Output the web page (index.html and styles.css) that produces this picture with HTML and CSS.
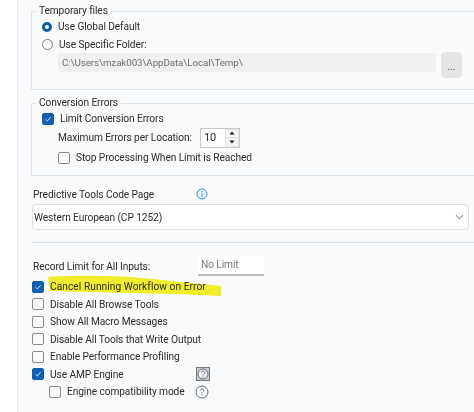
FILE: index.html
```html
<!DOCTYPE html>
<html lang="en">
<head>
    <meta charset="UTF-8">
    <meta name="viewport" content="width=device-width, initial-scale=1.0">
    <title>Workflow Configuration</title>
    <link rel="stylesheet" href="styles.css">
</head>
<body>
    <div id="wrap">
        <fieldset class="group group_temp">
            <legend>Temporary files</legend>
            <div class="row"><i class="radio on"></i><span>Use Global Default</span></div>
            <div class="row"><i class="radio"></i><span>Use Specific Folder:</span></div>
            <div class="folder">
                <div class="path">C:\Users\mzak003\AppData\Local\Temp\</div>
                <div class="browse">...</div>
            </div>
        </fieldset>
        <fieldset class="group group_errors">
            <legend>Conversion Errors</legend>
            <div class="row">
                <i class="check on"><svg viewBox="0 0 12 12"><path d="M3 6.2 5.2 8.3 9 4"/></svg></i>
                <span>Limit Conversion Errors</span>
            </div>
            <div class="row max_row">
                <span class="max_label">Maximum Errors per Location:</span>
                <div class="spinner">
                    <span class="spin_value">10</span>
                    <div class="spin_btns">
                        <b><svg viewBox="0 0 8 5"><path d="M4 .5 7.5 4.5H.5Z"/></svg></b>
                        <b><svg viewBox="0 0 8 5"><path d="M4 4.5 7.5 .5H.5Z"/></svg></b>
                    </div>
                </div>
            </div>
            <div class="row sub"><i class="check"></i><span>Stop Processing When Limit is Reached</span></div>
        </fieldset>
        <div class="code_label">
            <span>Predictive Tools Code Page</span>
            <svg class="info" viewBox="0 0 12 12"><circle cx="6" cy="6" r="5"/><path d="M6 5.4V9M6 3v1.2"/></svg>
        </div>
        <div class="select">
            <span>Western European (CP 1252)</span>
            <svg viewBox="0 0 10 6"><path d="M1 1 5 5 9 1"/></svg>
        </div>
        <div class="divider"></div>
        <div class="limit_row">
            <span class="limit_label">Record Limit for All Inputs:</span>
            <div class="limit_input">No Limit</div>
        </div>
        <div class="options">
            <div class="row">
                <i class="check on"><svg viewBox="0 0 12 12"><path d="M3 6.2 5.2 8.3 9 4"/></svg></i>
                <span class="cancel_label">Cancel Running Workflow on Error</span>
            </div>
            <div class="row"><i class="check"></i><span>Disable All Browse Tools</span></div>
            <div class="row"><i class="check"></i><span>Show All Macro Messages</span></div>
            <div class="row"><i class="check"></i><span>Disable All Tools that Write Output</span></div>
            <div class="row"><i class="check"></i><span>Enable Performance Profiling</span></div>
            <div class="row">
                <i class="check on"><svg viewBox="0 0 12 12"><path d="M3 6.2 5.2 8.3 9 4"/></svg></i>
                <span class="amp_label">Use AMP Engine</span>
                <svg class="help boxed" viewBox="0 0 14 14"><circle cx="7" cy="7" r="5"/><path d="M5.3 5.6C5.4 3.6 8.7 3.7 8.7 5.6 8.7 6.9 7 6.9 7 8.4M7 9.4v1"/></svg>
            </div>
            <div class="row sub_engine">
                <i class="check"></i>
                <span class="engine_label">Engine compatibility mode</span>
                <svg class="help" viewBox="0 0 14 14"><circle cx="7" cy="7" r="6"/><path d="M5.3 5.6C5.4 3.6 8.7 3.7 8.7 5.6 8.7 6.9 7 6.9 7 8.4M7 9.4v1"/></svg>
            </div>
        </div>
        <svg class="marker" viewBox="0 0 474 412"><path d="M48 277C70 275 110 276 130 277 160 279 195 284 221 286L221 296C190 294 120 293 50 291Z"/></svg>
    </div>
</body>
</html>
```

FILE: styles.css
```css
body {
    margin: 0;
    background: #fff;
    font-family: Roboto, Lato, sans-serif;
    font-size: 10.2px;
    letter-spacing: -.1px;
    color: #2c2c2c;
}
#wrap {
    position: relative;
    width: 457px;
    height: 412px;
    margin-left: 17px;
    box-sizing: border-box;
    padding: 0 0 0 13px;
    overflow: hidden;
    background: #f9fafc;
    border-left: 1px solid #eceef2;
}
span {
    white-space: nowrap;
}
.group {
    box-sizing: border-box;
    margin: 0 -14px 0 0;
    padding: 0 0 0 10px;
    border: 1px solid #dfe2e7;
    border-right: 0;
    min-width: 0;
}
.group legend {
    padding: 0 3px 0 4px;
    margin-left: -7px;
    line-height: 14px;
}
.group_temp {
    height: 86px;
    margin-top: 4px;
}
.group_errors {
    height: 80px;
    margin-top: 6px;
}
.row {
    display: flex;
    align-items: center;
    gap: 6px;
    height: 17.5px;
}
.radio {
    width: 9px;
    height: 9px;
    border: 1px solid #7a7a7a;
    border-radius: 50%;
    background: #fdfdfd;
}
.radio.on {
    width: 4px;
    height: 4px;
    border: 3.5px solid #0d5cae;
    background: #fff;
}
.check {
    display: block;
    width: 10px;
    height: 10px;
    border: 1px solid #8a8a8a;
    border-radius: 2px;
    background: #fbfbfb;
    flex: none;
}
.check.on {
    border-color: #0f5fb5;
    background: #0f5fb5;
}
.check svg {
    display: block;
    width: 10px;
    height: 10px;
    fill: none;
    stroke: #dbe9f8;
    stroke-width: 1.2;
}
.folder {
    display: flex;
    align-items: flex-start;
    gap: 5px;
    margin: 0 0 0 16px;
}
.path {
    width: 374px;
    height: 19px;
    padding-left: 4px;
    line-height: 19px;
    font-size: 9.8px;
    color: #6f6f6f;
    background: #eff0f2;
    border-radius: 3px;
}
.browse {
    width: 21px;
    height: 26px;
    margin-top: -1px;
    line-height: 30px;
    text-align: center;
    color: #555;
    background: #e4e5e7;
    border-radius: 4px;
}
.max_row {
    height: 20px;
    margin-left: 16px;
}
.max_label {
    width: 136px;
}
.spinner {
    display: flex;
    justify-content: space-between;
    align-items: center;
    width: 38px;
    height: 18px;
    border: 1px solid #c9c9c9;
    background: #fff;
}
.spin_value {
    padding-left: 3px;
    font-size: 11px;
}
.spin_btns {
    display: flex;
    flex-direction: column;
    gap: 1px;
    box-sizing: border-box;
    width: 14px;
    height: 18px;
    padding: 1px;
    background: #e2e2e2;
}
.spin_btns b {
    display: flex;
    align-items: center;
    justify-content: center;
    flex: 1;
    background: #f4f4f4;
}
.spin_btns svg {
    width: 6px;
    height: 4px;
    fill: #222;
}
.sub {
    margin-left: 16px;
    height: 20px;
}
.code_label {
    display: flex;
    align-items: center;
    height: 14px;
    margin: 11px 0 0 2px;
}
.code_label span {
    width: 163px;
}
.info {
    width: 12px;
    height: 12px;
    fill: #eaf3fb;
    stroke: #3f8fd6;
    stroke-width: 1;
}
.select {
    display: flex;
    justify-content: space-between;
    align-items: center;
    box-sizing: border-box;
    width: 437px;
    height: 26px;
    margin: 3px 0 0 1px;
    padding: 0 4px 0 1px;
    background: #fff;
    border: 1px solid #dcdfe4;
    border-radius: 4px;
}
.select svg {
    width: 9px;
    height: 6px;
    fill: none;
    stroke: #8a97a6;
    stroke-width: 1.2;
}
.divider {
    height: 1px;
    margin: 12px -14px 0 1px;
    background: #dcdfe4;
}
.limit_row {
    display: flex;
    align-items: center;
    height: 20px;
    margin: 13px 0 0 2px;
}
.limit_label {
    width: 165px;
}
.limit_input {
    box-sizing: border-box;
    width: 66px;
    height: 20px;
    padding-left: 3px;
    line-height: 18px;
    color: #777;
    background: #fff;
    border-bottom: 2px solid #bdbdbd;
}
.options {
    margin-top: 2px;
    margin-left: 1px;
}
.cancel_label {
    letter-spacing: .05px;
}
.amp_label {
    width: 140px;
}
.sub_engine {
    margin-left: 17px;
}
.engine_label {
    width: 122px;
}
.help {
    flex: none;
    width: 14px;
    height: 14px;
    fill: none;
    stroke: #5f6f82;
    stroke-width: 1;
}
.help.boxed {
    outline: 1px solid #777;
    outline-offset: -1px;
    background: #c9ccd0;
}
.help.boxed circle {
    fill: #f1f2f4;
}
.marker {
    position: absolute;
    left: -18px;
    top: 0;
    width: 474px;
    height: 412px;
    mix-blend-mode: multiply;
    pointer-events: none;
}
.marker path {
    fill: #f6f32c;
}
```
